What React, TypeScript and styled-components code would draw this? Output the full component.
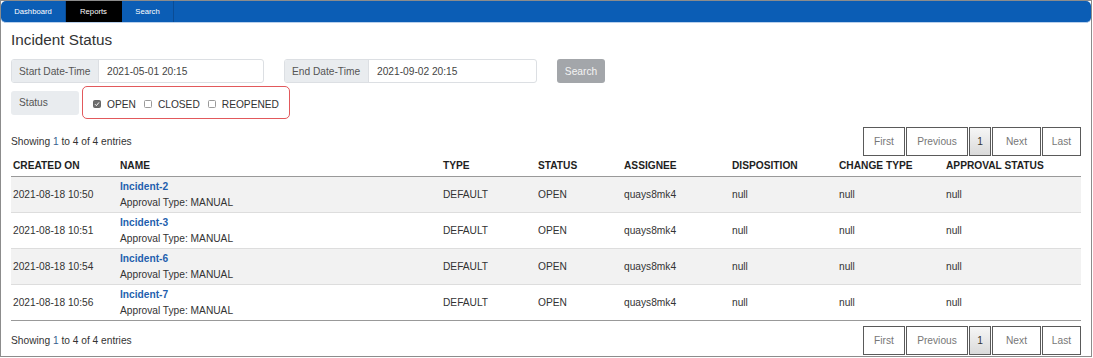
import React from 'react'
import styled, { createGlobalStyle } from 'styled-components'

const GlobalStyle = createGlobalStyle`
  body {
    margin: 0;
    font-family: 'Liberation Sans', Arial, sans-serif;
    background: #fff;
  }
`

const Frame = styled.div`
  width: 1092px;
  height: 357px;
  box-sizing: border-box;
  border: 1px solid #8c8c8c;
  overflow: hidden;
`

const NavBar = styled.nav`
  display: flex;
  height: 21px;
  background: #0b5db5;
  border-radius: 5px;
  border-bottom: 1px solid #b9d0ec;
  overflow: hidden;
`

const NavItem = styled.a<{ $active?: boolean; $w: number }>`
  display: flex;
  align-items: center;
  justify-content: center;
  width: ${(p) => p.$w}px;
  font-size: 7.7px;
  color: #fff;
  background: ${(p) => (p.$active ? '#000' : 'transparent')};
  border-right: 1px solid ${(p) => (p.$active ? '#000' : '#0a4c95')};
  cursor: pointer;
`

const Content = styled.div`
  padding: 0 10px;
`

const Title = styled.h1`
  margin: 7px 0 0;
  font-size: 15.3px;
  line-height: 20px;
  font-weight: normal;
  color: #333;
`

const FilterRow = styled.div`
  display: flex;
  gap: 20px;
  margin-top: 9px;
`

const InputGroup = styled.div`
  display: flex;
  width: 253px;
  height: 24px;
  box-sizing: border-box;
  border: 1px solid #dcdfe3;
  border-radius: 3px;
  overflow: hidden;
`

const Addon = styled.span<{ $w: number }>`
  display: flex;
  align-items: center;
  width: ${(p) => p.$w}px;
  flex-shrink: 0;
  padding-left: 7px;
  box-sizing: border-box;
  background: #e9ecef;
  border-right: 1px solid #dcdfe3;
  font-size: 10.2px;
  color: #555;
`

const Field = styled.span`
  display: flex;
  align-items: center;
  padding-left: 8px;
  font-size: 10.2px;
  color: #444;
`

const SearchButton = styled.button`
  width: 48px;
  height: 24px;
  border: none;
  border-radius: 3px;
  background: #a3a6aa;
  color: #f4f4f4;
  font-family: inherit;
  font-size: 10.2px;
  padding: 0;
`

const StatusRow = styled.div`
  display: flex;
  align-items: center;
  margin-top: 3px;
`

const StatusLabel = styled.span`
  display: flex;
  align-items: center;
  width: 68px;
  height: 24px;
  padding-left: 8px;
  box-sizing: border-box;
  background: #e9ecef;
  border-radius: 3px;
  font-size: 10.2px;
  color: #555;
`

const Highlight = styled.div`
  display: flex;
  align-items: center;
  margin-left: 3px;
  width: 208px;
  height: 33px;
  box-sizing: border-box;
  padding: 3px 0 0 10px;
  border: 1.5px solid #e2595c;
  border-radius: 5px;
`

const Check = styled.label`
  display: flex;
  align-items: center;
  gap: 6px;
  margin-right: 8px;
  font-size: 10.2px;
  color: #333;
`

const Box = styled.span<{ $checked?: boolean }>`
  display: inline-flex;
  align-items: center;
  justify-content: center;
  width: 8px;
  height: 8px;
  box-sizing: border-box;
  border: 1px solid ${(p) => (p.$checked ? '#666' : '#9a9a9a')};
  border-radius: 1.5px;
  background: ${(p) => (p.$checked ? '#6e6e6e' : '#fff')};
`

const InfoBar = styled.div<{ $top: number }>`
  display: flex;
  align-items: center;
  justify-content: space-between;
  margin-top: ${(p) => p.$top}px;
`

const Info = styled.span`
  font-size: 10.2px;
  color: #333;

  b {
    font-weight: normal;
    color: #3a5f90;
  }
`

const Pager = styled.div`
  display: flex;
  gap: 1px;
`

const PageButton = styled.button<{ $w: number; $active?: boolean }>`
  width: ${(p) => p.$w}px;
  height: 29px;
  padding: 0;
  border: 1px solid #5a5a5a;
  background: ${(p) =>
    p.$active ? 'linear-gradient(#f6f6f6, #dadada)' : '#fff'};
  color: ${(p) => (p.$active ? '#333' : '#777')};
  font-family: inherit;
  font-size: 10.2px;
`

const Table = styled.table`
  width: 1070px;
  table-layout: fixed;
  border-collapse: collapse;
  font-size: 10.2px;
  color: #333;
`

const Th = styled.th`
  text-align: left;
  padding: 3px 2px 3px;
  line-height: 14px;
  font-weight: bold;
  color: #1e1e1e;
  border-bottom: 1px solid #999;
`

const Row = styled.tr<{ $striped: boolean }>`
  background: ${(p) => (p.$striped ? '#f2f2f2' : '#fff')};
  border-bottom: 1px solid #ddd;

  &:last-child {
    border-bottom: 1px solid #999;
  }
`

const Td = styled.td`
  height: 35px;
  padding: 0 2px;
  vertical-align: middle;
  line-height: 16px;
`

const IncidentLink = styled.a`
  display: block;
  font-weight: bold;
  color: #1f5fae;
`

const columns = [
  { label: 'CREATED ON', width: 107 },
  { label: 'NAME', width: 323 },
  { label: 'TYPE', width: 95 },
  { label: 'STATUS', width: 86 },
  { label: 'ASSIGNEE', width: 108 },
  { label: 'DISPOSITION', width: 107 },
  { label: 'CHANGE TYPE', width: 107 },
  { label: 'APPROVAL STATUS', width: 137 },
]

const incidents = [
  { created: '2021-08-18 10:50', name: 'Incident-2' },
  { created: '2021-08-18 10:51', name: 'Incident-3' },
  { created: '2021-08-18 10:54', name: 'Incident-6' },
  { created: '2021-08-18 10:56', name: 'Incident-7' },
]

const CheckMark = () => (
  <svg width="6" height="6" viewBox="0 0 6 6">
    <path d="M1 3.2 L2.4 4.6 L5 1.4" fill="none" stroke="#fff" strokeWidth="1" />
  </svg>
)

const Pagination = () => (
  <Pager>
    <PageButton $w={42}>First</PageButton>
    <PageButton $w={62}>Previous</PageButton>
    <PageButton $w={22} $active>
      1
    </PageButton>
    <PageButton $w={49}>Next</PageButton>
    <PageButton $w={39}>Last</PageButton>
  </Pager>
)

const Entries = () => (
  <Info>
    Showing <b>1</b> to 4 of 4 entries
  </Info>
)

export default function App() {
  return (
    <Frame>
      <GlobalStyle />
      <NavBar>
        <NavItem $w={64}>Dashboard</NavItem>
        <NavItem $w={55} $active>
          Reports
        </NavItem>
        <NavItem $w={51}>Search</NavItem>
      </NavBar>

      <Content>
        <Title>Incident Status</Title>

        <FilterRow>
          <InputGroup>
            <Addon $w={87}>Start Date-Time</Addon>
            <Field>2021-05-01 20:15</Field>
          </InputGroup>
          <InputGroup>
            <Addon $w={84}>End Date-Time</Addon>
            <Field>2021-09-02 20:15</Field>
          </InputGroup>
          <SearchButton>Search</SearchButton>
        </FilterRow>

        <StatusRow>
          <StatusLabel>Status</StatusLabel>
          <Highlight>
            <Check>
              <Box $checked>
                <CheckMark />
              </Box>
              OPEN
            </Check>
            <Check>
              <Box />
              CLOSED
            </Check>
            <Check>
              <Box />
              REOPENED
            </Check>
          </Highlight>
        </StatusRow>

        <InfoBar $top={8}>
          <Entries />
          <Pagination />
        </InfoBar>

        <Table>
          <colgroup>
            {columns.map((c) => (
              <col key={c.label} style={{ width: c.width }} />
            ))}
          </colgroup>
          <thead>
            <tr>
              {columns.map((c) => (
                <Th key={c.label}>{c.label}</Th>
              ))}
            </tr>
          </thead>
          <tbody>
            {incidents.map((inc, i) => (
              <Row key={inc.name} $striped={i % 2 === 0}>
                <Td>{inc.created}</Td>
                <Td>
                  <IncidentLink>{inc.name}</IncidentLink>
                  Approval Type: MANUAL
                </Td>
                <Td>DEFAULT</Td>
                <Td>OPEN</Td>
                <Td>quays8mk4</Td>
                <Td>null</Td>
                <Td>null</Td>
                <Td>null</Td>
              </Row>
            ))}
          </tbody>
        </Table>

        <InfoBar $top={5}>
          <Entries />
          <Pagination />
        </InfoBar>
      </Content>
    </Frame>
  )
}
